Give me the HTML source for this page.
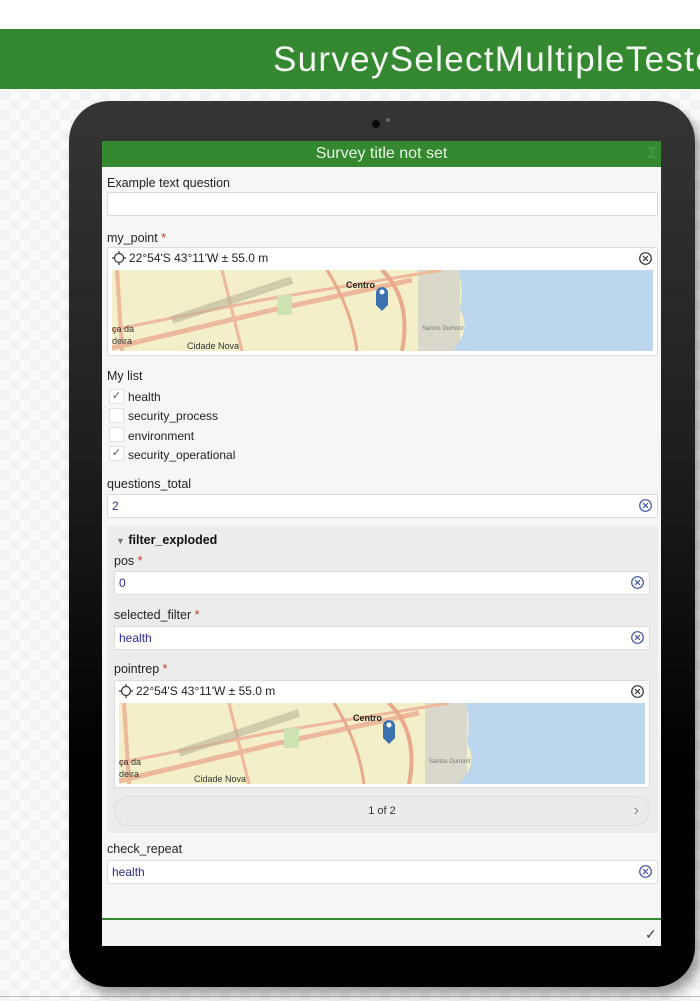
<!DOCTYPE html>
<html><head><meta charset="utf-8"><style>
*{margin:0;padding:0;box-sizing:border-box}
body{width:700px;height:1001px;overflow:hidden;background:#fff;font-family:"Liberation Sans",sans-serif;position:relative;
background-image:linear-gradient(45deg,#f2f2f2 25%,transparent 25%,transparent 75%,#f2f2f2 75%),linear-gradient(45deg,#f2f2f2 25%,#fafafa 25%,#fafafa 75%,#f2f2f2 75%);background-size:20px 20px;background-position:0 0,10px 10px}
.a{position:absolute}
.top{left:0;top:0;width:700px;height:29px;background:#fff}
.hdr{left:0;top:29px;width:700px;height:60px;background:#338830;color:#f4f8f2;font-size:35px;font-weight:300;white-space:nowrap;padding-left:273px;line-height:62px;overflow:hidden;letter-spacing:1.3px}
.tab{left:69px;top:101px;width:626px;height:886px;border-radius:40px;background:linear-gradient(#353535,#1e1e1e 40%,#000 75%);box-shadow:6px 8px 10px rgba(0,0,0,.35)}
.scr{left:102px;top:141px;width:559px;height:805px;background:#f5f7f6;overflow:hidden;font-size:12px;color:#222}
.tb{left:0;top:0;width:559px;height:26px;background:#338830;color:#e8f3e6;font-size:16px;text-align:center;line-height:26px}
.lbl{font-size:12.5px;color:#222}
.req{color:#c0392b}
.inp{background:#fff;border:1px solid #dcdcdc;border-radius:2px}
.val{color:#2a2aa0;font-size:12px;line-height:22px;padding-left:4px}
.x{width:13px;height:13px}
.cb{width:15px;height:15px;background:#fff;border:1px solid #e2e2e2;font-size:11px;line-height:13px;text-align:center;color:#555}
.loc{font-size:12px;display:flex;align-items:center;gap:3px}
</style></head><body>
<svg width="0" height="0" style="position:absolute"><defs>
<g id="xb"><circle cx="6.5" cy="6.5" r="5.8" fill="none" stroke="#4050a8" stroke-width="1.2"/><path d="M4 4L9 9M9 4L4 9" stroke="#4050a8" stroke-width="1.2"/></g>
<g id="xk"><circle cx="6.5" cy="6.5" r="5.8" fill="none" stroke="#333" stroke-width="1.2"/><path d="M4 4L9 9M9 4L4 9" stroke="#333" stroke-width="1.2"/></g>
<g id="ch"><circle cx="7" cy="7" r="4.5" fill="none" stroke="#333" stroke-width="1.2"/><path d="M7 0V3M7 11V14M0 7H3M11 7H14" stroke="#333" stroke-width="1.2"/></g>
<g id="map">
<rect width="541" height="81" fill="#f3efc8"/>
<rect x="306" y="0" width="42" height="81" fill="#dad8cb"/>
<path d="M346 0H541V81H340Q360 60 348 40Q352 15 346 0Z" fill="#bcd6ee"/>
<path d="M0 78 L160 40 L300 10" stroke="#eeb89a" stroke-width="5" fill="none"/>
<path d="M0 60 L150 30 L330 0" stroke="#eeb89a" stroke-width="3" fill="none"/>
<path d="M110 0 L130 81" stroke="#eeb89a" stroke-width="3" fill="none"/>
<path d="M215 0 Q240 40 245 81" stroke="#e9a98a" stroke-width="3" fill="none"/>
<path d="M270 0 Q300 30 290 81" stroke="#e9a98a" stroke-width="4" fill="none"/>
<path d="M5 0 L10 81" stroke="#eeb89a" stroke-width="4" fill="none"/>
<path d="M60 50 L180 10" stroke="#b9b39a" stroke-width="8" fill="none" opacity=".6"/>
<rect x="165" y="25" width="15" height="20" fill="#cfe3b0"/>
<text x="234" y="18" font-size="9" font-weight="bold" font-family="Liberation Sans" fill="#222">Centro</text>
<text x="75" y="79" font-size="9" font-family="Liberation Sans" fill="#333">Cidade Nova</text>
<text x="0" y="62" font-size="9" font-family="Liberation Sans" fill="#333">ça da</text>
<text x="0" y="74" font-size="9" font-family="Liberation Sans" fill="#333">deira</text>
<text x="310" y="60" font-size="6" font-family="Liberation Sans" fill="#777">Santos Dumont</text>
<path d="M270 17a6 6 0 0 1 6 6v12l-6 6-6-6v-12a6 6 0 0 1 6-6z" fill="#3a72b0"/>
<circle cx="270" cy="22" r="2.5" fill="#fff"/>
</g></defs></svg>
<div class="a top"></div>
<div class="a hdr">SurveySelectMultipleTester</div>
<div class="a" style="left:0;top:996px;width:700px;height:1px;background:#bbb"></div>
<div class="a tab"></div>
<div class="a" style="left:372px;top:120px;width:8px;height:8px;border-radius:50%;background:#0a0a0a"></div>
<div class="a" style="left:386px;top:118px;width:4px;height:4px;border-radius:50%;background:#666"></div>
<div class="a scr">
 <div class="a tb">Survey title not set</div>
 <div class="a" style="right:4px;top:4px;color:#4a9a46;font-size:16px">Σ</div>
 <div class="a lbl" style="left:5px;top:35px">Example text question</div>
 <div class="a inp" style="left:5px;top:51px;width:551px;height:24px"></div>
 <div class="a lbl" style="left:5px;top:90px">my_point <span class="req">*</span></div>
 <div class="a inp" style="left:5px;top:106px;width:551px;height:109px"></div>
 <div class="a loc" style="left:10px;top:110px"><svg width="14" height="14"><use href="#ch"/></svg>22°54'S 43°11'W ± 55.0 m</div>
 <svg class="a x" style="left:537px;top:111px"><use href="#xk"/></svg>
 <svg class="a" style="left:10px;top:129px" width="541" height="81"><use href="#map"/></svg>
 <div class="a lbl" style="left:5px;top:228px">My list</div>
 <div class="a cb" style="left:7px;top:248px">✓</div><div class="a" style="left:26px;top:249px">health</div>
 <div class="a cb" style="left:7px;top:267px"></div><div class="a" style="left:26px;top:268px">security_process</div>
 <div class="a cb" style="left:7px;top:286px"></div><div class="a" style="left:26px;top:288px">environment</div>
 <div class="a cb" style="left:7px;top:305px">✓</div><div class="a" style="left:26px;top:307px">security_operational</div>
 <div class="a lbl" style="left:5px;top:336px">questions_total</div>
 <div class="a inp val" style="left:5px;top:353px;width:551px;height:24px">2</div>
 <svg class="a x" style="left:537px;top:358px"><use href="#xb"/></svg>
 <div class="a" style="left:5px;top:385px;width:551px;height:307px;background:#ececec"></div>
 <div class="a" style="left:14px;top:392px;font-size:12.5px;font-weight:bold;color:#111"><span style="color:#777;font-size:9px">▼</span> filter_exploded</div>
 <div class="a lbl" style="left:12px;top:413px">pos <span class="req">*</span></div>
 <div class="a inp val" style="left:12px;top:430px;width:536px;height:24px">0</div>
 <svg class="a x" style="left:529px;top:435px"><use href="#xb"/></svg>
 <div class="a lbl" style="left:12px;top:467px">selected_filter <span class="req">*</span></div>
 <div class="a inp val" style="left:12px;top:485px;width:536px;height:24px">health</div>
 <svg class="a x" style="left:529px;top:490px"><use href="#xb"/></svg>
 <div class="a lbl" style="left:12px;top:521px">pointrep <span class="req">*</span></div>
 <div class="a inp" style="left:12px;top:539px;width:536px;height:108px"></div>
 <div class="a loc" style="left:17px;top:543px"><svg width="14" height="14"><use href="#ch"/></svg>22°54'S 43°11'W ± 55.0 m</div>
 <svg class="a x" style="left:529px;top:544px"><use href="#xk"/></svg>
 <svg class="a" style="left:17px;top:562px" width="526" height="81"><use href="#map"/></svg>
 <div class="a" style="left:12px;top:655px;width:536px;height:30px;border:1px solid #ddd;border-radius:15px;background:#ebebeb;text-align:center;line-height:28px;font-size:11px;color:#333">1 of 2<span style="position:absolute;right:10px;top:0;color:#888;font-size:16px">›</span></div>
 <div class="a lbl" style="left:5px;top:701px">check_repeat</div>
 <div class="a inp val" style="left:5px;top:719px;width:551px;height:24px">health</div>
 <svg class="a x" style="left:537px;top:724px"><use href="#xb"/></svg>
 <div class="a" style="left:0;top:777px;width:559px;height:2px;background:#338830"></div>
 <div class="a" style="left:0;top:779px;width:559px;height:26px;background:#f5f5f5"></div>
 <div class="a" style="left:543px;top:785px;font-size:14px;color:#444">✓</div>
</div>
</body></html>
